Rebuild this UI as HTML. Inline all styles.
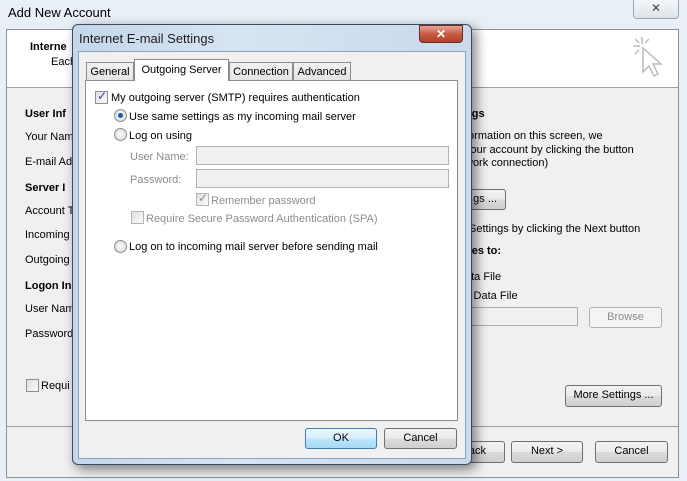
<!DOCTYPE html>
<html><head><style>
*{margin:0;padding:0;box-sizing:border-box}
body{width:687px;height:481px;overflow:hidden;background:#dfe6ee;font-family:"Liberation Sans",sans-serif;font-size:11px;color:#000;position:relative}
.a{position:absolute;white-space:nowrap}
.b{font-weight:bold}
.btn{position:absolute;border:1px solid #707070;border-radius:3px;background:linear-gradient(#f2f2f2,#ebebeb 50%,#dcdcdc 50%,#cfcfcf);text-align:center;line-height:19px}
.cb{position:absolute;width:13px;height:13px;border:1px solid #8f8f8f;background:linear-gradient(135deg,#e0e0e0,#fafafa)}
.rb{position:absolute;width:13px;height:13px;border:1px solid #8f8f8f;border-radius:50%;background:radial-gradient(#fafafa,#d6d6d6)}
.g{color:#8d8d8d}
</style></head><body>
<div class="a" style="left:0;top:0;width:687px;height:481px;background:#e9eff6"></div>
<div class="a" style="left:8px;top:5px;font-size:13px;color:#000">Add New Account</div>
<div class="a" style="left:633px;top:0;width:46px;height:19px;border:1px solid #9aa;border-top:none;border-radius:0 0 4px 4px;background:linear-gradient(#f4f6f8,#dde3ea);text-align:center;font-size:12px;color:#444;line-height:17px">✕</div>
<div class="a" style="left:6px;top:29px;width:673px;height:449px;border:1px solid #8b9199;background:#f0f0f0"></div>
<div class="a" style="left:7px;top:30px;width:671px;height:58px;background:#fff;border-bottom:1px solid #a0a0a0"></div>
<div class="a b" style="left:30px;top:41px">Interne</div>
<div class="a" style="left:51px;top:56px">Each</div>
<svg class="a" style="left:630px;top:35px" width="36" height="50"><g stroke="#bbb" stroke-width="1.5" fill="none"><path d="M12 2v7M3 11h7M5 4l4 4M19 4l-4 4M5 19l4-4"/><path d="M13 13l0 24 6-6 5 10 4-2-5-10 8 0z" fill="#fff"/></g></svg>
<div class="a b" style="left:25px;top:108px">User Inf</div>
<div class="a" style="left:25px;top:131px">Your Nam</div>
<div class="a" style="left:25px;top:156px">E-mail Add</div>
<div class="a b" style="left:25px;top:182px">Server I</div>
<div class="a" style="left:25px;top:205px">Account T</div>
<div class="a" style="left:25px;top:229px">Incoming</div>
<div class="a" style="left:25px;top:254px">Outgoing</div>
<div class="a b" style="left:25px;top:280px">Logon In</div>
<div class="a" style="left:25px;top:303px">User Nam</div>
<div class="a" style="left:25px;top:328px">Password</div>
<div class="cb" style="left:26px;top:379px"></div>
<div class="a" style="left:41px;top:380px">Requi</div>
<div class="a b" style="left:465px;top:108px">ngs</div>
<div class="a" style="left:465px;top:130px">formation on this screen, we</div>
<div class="a" style="left:465px;top:144px">your account by clicking the button</div>
<div class="a" style="left:465px;top:157px">work connection)</div>
<div class="btn" style="left:440px;top:189px;width:66px;height:21px;text-align:right;padding-right:8px">gs ...</div>
<div class="a" style="left:469px;top:223px">Settings by clicking the Next button</div>
<div class="a b" style="left:465px;top:245px">ges to:</div>
<div class="a" style="left:465px;top:271px">ata File</div>
<div class="a" style="left:465px;top:290px">k Data File</div>
<div class="a" style="left:440px;top:307px;width:138px;height:19px;border:1px solid #abadb3;background:#f0f0f0"></div>
<div class="btn g" style="left:589px;top:307px;width:73px;height:21px;border-color:#adb2b5;background:#f4f4f4">Browse</div>
<div class="btn" style="left:565px;top:385px;width:97px;height:22px">More Settings ...</div>
<div class="a" style="left:7px;top:426px;width:671px;height:1px;background:#a0a0a0"></div>
<div class="btn" style="left:440px;top:441px;width:65px;height:22px;text-align:right;padding-right:18px">ack</div>
<div class="btn" style="left:511px;top:441px;width:72px;height:22px">Next &gt;</div>
<div class="btn" style="left:595px;top:441px;width:73px;height:22px">Cancel</div>
<div class="a" style="left:72px;top:24px;width:400px;height:441px;border-radius:6px;box-shadow:4px 4px 12px rgba(0,0,0,.5)"></div>
<div class="a" style="left:72px;top:24px;width:400px;height:441px;border:1px solid #3b4a5e;border-radius:6px;background:linear-gradient(90deg,#c4d6ea,#d7e4f2 40%,#c9daec)"></div>
<div class="a" style="left:79px;top:31px;font-size:13px;color:#1e1e1e">Internet E-mail Settings</div>
<div class="a" style="left:419px;top:25px;width:44px;height:18px;border:1px solid #6b2a22;border-radius:0 0 4px 4px;background:linear-gradient(#e8a695,#c75c45 50%,#b1402a);color:#fff;text-align:center;font-weight:bold;font-size:12px;line-height:16px">✕</div>
<div class="a" style="left:78px;top:51px;width:388px;height:408px;border:1px solid #8ea3bd;background:#f0f0f0"></div>
<div class="a" style="left:86px;top:62px;width:48px;height:19px;border:1px solid #898c95;border-bottom:none;background:linear-gradient(#f2f2f2,#e3e3e3);text-align:center;line-height:19px">General</div>
<div class="a" style="left:134px;top:59px;width:95px;height:22px;border:1px solid #898c95;border-bottom:none;background:#fff;text-align:center;line-height:21px">Outgoing Server</div>
<div class="a" style="left:229px;top:62px;width:64px;height:19px;border:1px solid #898c95;border-bottom:none;background:linear-gradient(#f2f2f2,#e3e3e3);text-align:center;line-height:19px">Connection</div>
<div class="a" style="left:293px;top:62px;width:58px;height:19px;border:1px solid #898c95;border-bottom:none;background:linear-gradient(#f2f2f2,#e3e3e3);text-align:center;line-height:19px">Advanced</div>
<div class="a" style="left:85px;top:80px;width:373px;height:341px;border:1px solid #898c95;background:#fff"></div>
<div class="a" style="left:135px;top:80px;width:93px;height:2px;background:#fff"></div>
<div class="cb" style="left:95px;top:91px"></div><div class="a" style="left:97px;top:89px;color:#2a4a8a;font-size:12px">✓</div>
<div class="a" style="left:111px;top:92px">My outgoing server (SMTP) requires authentication</div>
<div class="rb" style="left:114px;top:109px"></div><div class="a" style="left:118px;top:113px;width:5px;height:5px;border-radius:50%;background:#1a5ea8"></div>
<div class="a" style="left:129px;top:111px">Use same settings as my incoming mail server</div>
<div class="rb" style="left:114px;top:128px"></div>
<div class="a" style="left:129px;top:130px">Log on using</div>
<div class="a g" style="left:130px;top:151px">User Name:</div>
<div class="a" style="left:196px;top:146px;width:253px;height:19px;border:1px solid #adb2b5;background:#f0f0f0"></div>
<div class="a g" style="left:130px;top:174px">Password:</div>
<div class="a" style="left:196px;top:169px;width:253px;height:19px;border:1px solid #adb2b5;background:#f0f0f0"></div>
<div class="cb" style="left:196px;top:193px;border-color:#b5b5b5"></div><div class="a g" style="left:198px;top:191px;font-size:12px">✓</div>
<div class="a g" style="left:211px;top:195px">Remember password</div>
<div class="cb" style="left:131px;top:211px;border-color:#b5b5b5"></div>
<div class="a g" style="left:146px;top:213px">Require Secure Password Authentication (SPA)</div>
<div class="rb" style="left:114px;top:240px"></div>
<div class="a" style="left:129px;top:241px">Log on to incoming mail server before sending mail</div>
<div class="btn" style="left:305px;top:428px;width:72px;height:21px;border-color:#3c7fb1;background:linear-gradient(#eaf6fd,#d9f0fc 50%,#bee6fd 50%,#a7d9f5)">OK</div>
<div class="btn" style="left:384px;top:428px;width:73px;height:21px">Cancel</div>
</body></html>
